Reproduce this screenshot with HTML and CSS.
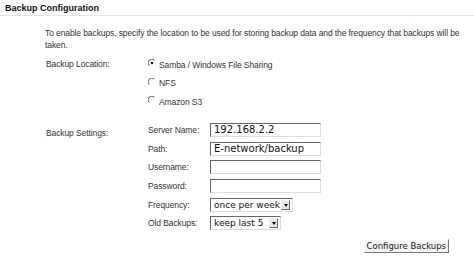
FILE: index.html
```html
<!DOCTYPE html>
<html lang="en">
<head>
    <meta charset="UTF-8">
    <title>Backup Configuration</title>
    <link rel="stylesheet" href="styles.css">
</head>
<body>
    <div class="header">Backup Configuration</div>

    <div class="content">
        <p class="intro">To enable backups, specify the location to be used for storing backup data and the frequency that backups will be taken.</p>

        <div class="section">
            <div class="section-label">Backup Location:</div>
            <div class="options">
                <div class="option">
                    <svg class="radio" width="8" height="8" viewBox="0 0 8 8"><path d="M6.5 1.2 A3.4 3.4 0 0 0 1.2 6.5" fill="none" stroke="#555" stroke-width="1"/><circle cx="4" cy="4" r="1.3" fill="#222"/></svg>
                    <span>Samba / Windows File Sharing</span>
                </div>
                <div class="option">
                    <svg class="radio" width="8" height="8" viewBox="0 0 8 8"><path d="M6.5 1.2 A3.4 3.4 0 0 0 1.2 6.5" fill="none" stroke="#555" stroke-width="1"/></svg>
                    <span>NFS</span>
                </div>
                <div class="option">
                    <svg class="radio" width="8" height="8" viewBox="0 0 8 8"><path d="M6.5 1.2 A3.4 3.4 0 0 0 1.2 6.5" fill="none" stroke="#555" stroke-width="1"/></svg>
                    <span>Amazon S3</span>
                </div>
            </div>
        </div>

        <div class="section settings-section">
            <div class="section-label">Backup Settings:</div>
            <div class="settings">
                <div class="field"><label>Server Name:</label><div class="textbox">192.168.2.2</div></div>
                <div class="field"><label>Path:</label><div class="textbox">E-network/backup</div></div>
                <div class="field"><label>Username:</label><div class="textbox"></div></div>
                <div class="field"><label>Password:</label><div class="textbox"></div></div>
                <div class="field"><label>Frequency:</label><div class="select freq"><span>once per week</span><span class="arrow"></span></div></div>
                <div class="field"><label>Old Backups:</label><div class="select keep"><span>keep last 5</span><span class="arrow"></span></div></div>
            </div>
        </div>

        <div class="actions">
            <button class="btn">Configure Backups</button>
        </div>
    </div>
</body>
</html>
```

FILE: styles.css
```css
* {
    box-sizing: border-box;
}

body {
    margin: 0;
    font-family: "Liberation Sans", Arial, sans-serif;
    font-size: 8.5px;
    letter-spacing: -0.1px;
    color: #333;
    background: #fff;
}

.header {
    font-weight: bold;
    font-size: 9px;
    letter-spacing: 0;
    color: #111;
    padding: 3px 5px 0;
    height: 16px;
    border-bottom: 1px solid #e4e4e4;
}

.content {
    padding-left: 45px;
}

.intro {
    margin: 11px 0 0;
    width: 420px;
    line-height: 12px;
}

.section {
    display: flex;
    margin-top: 8px;
}

.section-label {
    width: 103px;
    padding-left: 1px;
}

.options {
    display: flex;
    flex-direction: column;
    gap: 7.5px;
}

.option {
    display: flex;
    align-items: center;
    height: 11px;
}

.radio {
    margin-right: 3px;
    margin-top: -3px;
}

.settings-section {
    margin-top: 21px;
}

.settings {
    display: flex;
    flex-direction: column;
    gap: 4.7px;
    margin-top: -5px;
}

.field {
    display: flex;
    align-items: center;
    height: 14px;
}

.field label {
    width: 62px;
}

.textbox,
.select {
    font-family: "DejaVu Sans", sans-serif;
    font-size: 10px;
    letter-spacing: 0;
    color: #111;
    height: 14px;
    line-height: 12px;
    padding: 0 3px;
    white-space: nowrap;
    border: 1px solid;
    border-color: #666 #ddd #ddd #666;
    background: #fff;
}

.textbox {
    width: 111px;
}

.select {
    display: flex;
    justify-content: space-between;
    align-items: center;
    font-size: 9px;
    padding-right: 2px;
}

.freq {
    width: 83px;
}

.keep {
    width: 71px;
}

.arrow {
    flex-shrink: 0;
    width: 9px;
    height: 10px;
    border: 1px solid;
    border-color: #eee #666 #666 #eee;
    background: #e8e8e8;
    position: relative;
}

.arrow::after {
    content: "";
    position: absolute;
    left: 2px;
    top: 3px;
    border-left: 2px solid transparent;
    border-right: 2px solid transparent;
    border-top: 3px solid #000;
}

.actions {
    display: flex;
    justify-content: flex-end;
    width: 404px;
    margin-top: 9px;
}

.btn {
    font-family: "DejaVu Sans", sans-serif;
    font-size: 8.5px;
    color: #222;
    background: #f4f4f4;
    height: 14px;
    padding: 0 2px;
    border: 1px solid;
    border-color: #fff #777 #777 #fff;
    line-height: 12px;
}
```
